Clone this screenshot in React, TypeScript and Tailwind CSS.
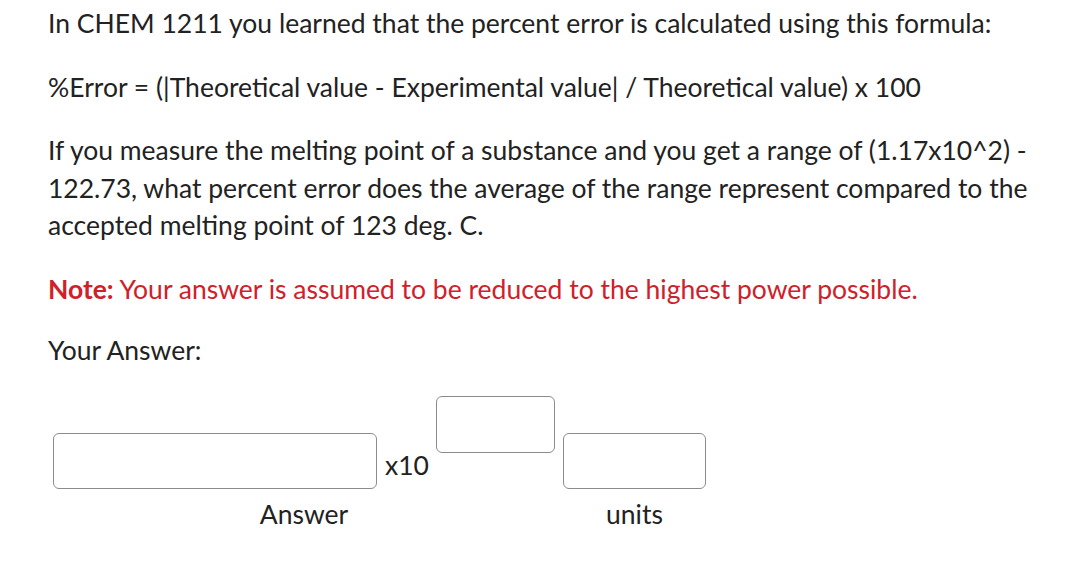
export default function App() {
  return (
    <div className="min-h-screen bg-white pl-[48px] pr-[42px] pt-[5px] text-[26.5px] leading-[37.5px] text-[#222222] [font-family:Lato,'Liberation_Sans',sans-serif]">
      <p>In CHEM 1211 you learned that the percent error is calculated using this formula:</p>
      <p className="mt-[26px]">%Error = (|Theoretical value - Experimental value| / Theoretical value) x 100</p>
      <p className="mt-[26px]">
        If you measure the melting point of a substance and you get a range of (1.17x10^2) - 122.73, what percent error
        does the average of the range represent compared to the accepted melting point of 123 deg. C.
      </p>
      <p className="mt-[26px] text-[#d0202a]">
        <strong className="font-bold">Note:</strong> Your answer is assumed to be reduced to the highest power possible.
      </p>
      <p className="mt-[24px]">Your Answer:</p>

      <div className="mt-[26px] flex items-start gap-[8px] pl-[5px]">
        <div className="flex flex-col items-center">
          <div className="flex items-start">
            <input
              type="text"
              className="mt-[37px] h-[56px] w-[324px] rounded-[6px] border border-[#8c8c8c] bg-white outline-none"
            />
            <span className="ml-[8px] mt-[58px] leading-[22px]">x10</span>
            <input
              type="text"
              className="ml-[7px] h-[57px] w-[119px] rounded-[6px] border border-[#8c8c8c] bg-white outline-none"
            />
          </div>
          <span className="mt-[7px]">Answer</span>
        </div>
        <div className="flex flex-col items-center">
          <input
            type="text"
            className="mt-[37px] h-[56px] w-[143px] rounded-[6px] border border-[#8c8c8c] bg-white outline-none"
          />
          <span className="mt-[7px]">units</span>
        </div>
      </div>
    </div>
  );
}
